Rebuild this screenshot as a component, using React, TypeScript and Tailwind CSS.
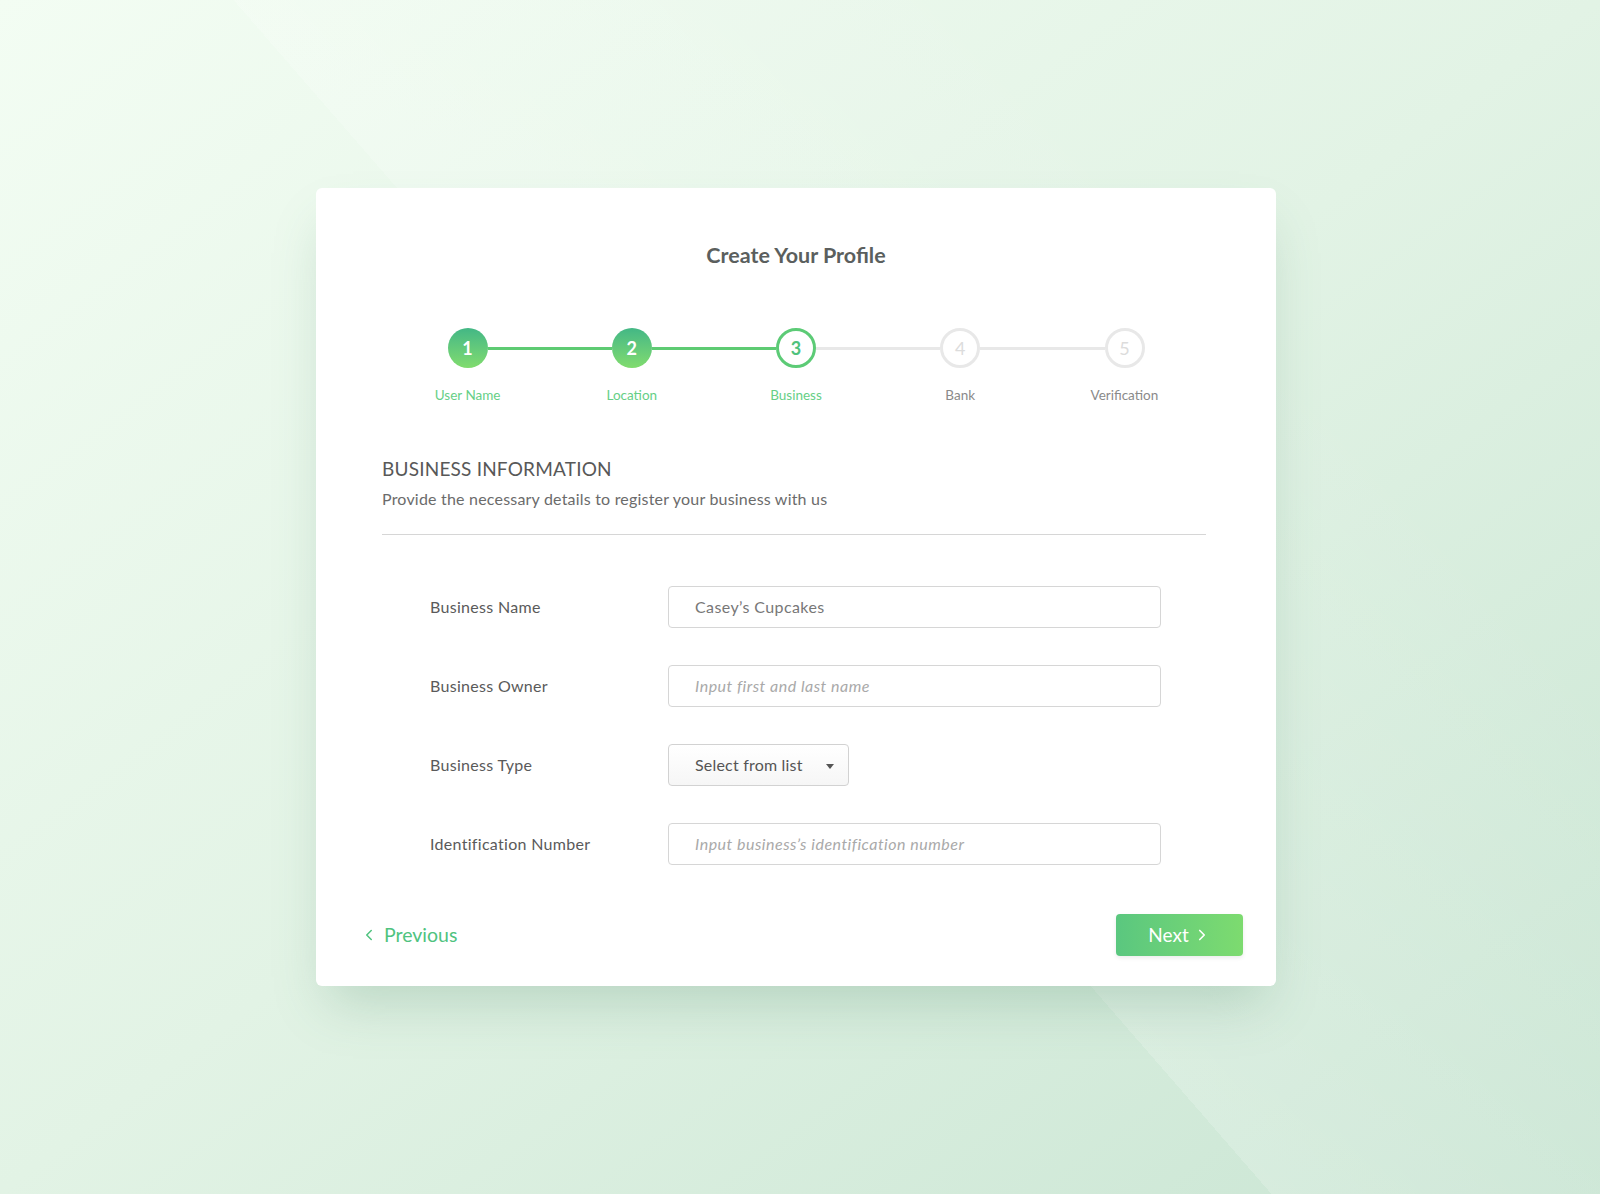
import { ChevronLeft, ChevronRight } from "lucide-react";

const steps = [
  { n: 1, label: "User Name", state: "done" },
  { n: 2, label: "Location", state: "done" },
  { n: 3, label: "Business", state: "current" },
  { n: 4, label: "Bank", state: "todo" },
  { n: 5, label: "Verification", state: "todo" },
];

function StepCircle({ n, state }: { n: number; state: string }) {
  if (state === "done") {
    return (
      <div className="w-10 h-10 rounded-full bg-gradient-to-b from-[#42b785] to-[#80dc6d] flex items-center justify-center text-white text-[18px] font-bold shrink-0">
        {n}
      </div>
    );
  }
  if (state === "current") {
    return (
      <div className="w-10 h-10 rounded-full border-[3px] border-[#5ccb76] bg-white flex items-center justify-center text-[#4fc27c] text-[18px] font-bold shrink-0">
        {n}
      </div>
    );
  }
  return (
    <div className="w-10 h-10 rounded-full border-[3px] border-[#e8e8e8] bg-white flex items-center justify-center text-[#dcdcdc] text-[18px] shrink-0">
      {n}
    </div>
  );
}

function Stepper() {
  return (
    <div className="w-[821px] mx-auto">
      <div className="flex items-center px-[62px]">
        {steps.map((s, i) => (
          <div key={s.n} className={i < steps.length - 1 ? "flex items-center flex-1" : "flex items-center"}>
            <StepCircle n={s.n} state={s.state} />
            {i < steps.length - 1 && (
              <div
                className={
                  i < 2 ? "flex-1 h-[3px] bg-[#5ecb73]" : "flex-1 h-[3px] bg-[#e8e8e8]"
                }
              />
            )}
          </div>
        ))}
      </div>
      <div className="grid grid-cols-5 mt-[19px]">
        {steps.map((s) => (
          <div
            key={s.n}
            className={
              s.state === "todo"
                ? "text-center text-[13.5px] leading-4 text-[#8a8a8a]"
                : "text-center text-[13.5px] leading-4 text-[#66cf86]"
            }
          >
            {s.label}
          </div>
        ))}
      </div>
    </div>
  );
}

function FieldRow({ label, children }: { label: string; children: React.ReactNode }) {
  return (
    <div className="flex items-center">
      <div className="w-[286px] pl-[48px] text-[16px] tracking-[0.3px] text-[#5a5a5a]">{label}</div>
      {children}
    </div>
  );
}

export default function App() {
  return (
    <div
      className="relative min-h-[1194px] w-full overflow-hidden bg-gradient-to-br from-[#f3fdf3] via-[#e2f3e5] to-[#c9e5d3]"
      style={{ fontFamily: "Lato, 'Open Sans', sans-serif" }}
    >
      {/* soft facet */}
      <div className="absolute inset-0 bg-[linear-gradient(49deg,transparent_48.2%,rgba(255,255,255,0.18)_48.2%,transparent_78%)]" />

      <div className="relative flex pl-[316px] pt-[188px]">
        <div className="w-[960px] h-[798px] bg-white rounded-[6px] shadow-[0_28px_50px_-12px_rgba(70,130,100,0.25)] flex flex-col">
          <h1 className="pt-[53px] text-center text-[21.5px] leading-7 font-bold text-[#5b5f5e]">
            Create Your Profile
          </h1>

          <div className="mt-[59px]">
            <Stepper />
          </div>

          <div className="px-[66px] mt-[54px]">
            <h2 className="text-[19px] leading-6 text-[#585858] tracking-[0.2px]">BUSINESS INFORMATION</h2>
            <p className="mt-[8px] text-[16px] leading-5 tracking-[0.2px] text-[#6b6b6b]">
              Provide the necessary details to register your business with us
            </p>
            <div className="mt-[25px] w-[824px] h-px bg-[#d6d6d6]" />

            <div className="mt-[51px] flex flex-col gap-[37px]">
              <FieldRow label="Business Name">
                <div className="w-[493px] h-[42px] rounded-[4px] border border-[#d6d6d6] flex items-center pl-[26px] text-[16px] tracking-[0.4px] text-[#777]">
                  Casey’s Cupcakes
                </div>
              </FieldRow>
              <FieldRow label="Business Owner">
                <div className="w-[493px] h-[42px] rounded-[4px] border border-[#d6d6d6] flex items-center pl-[26px] text-[16px] tracking-[0.5px] italic text-[#a9a9a9]">
                  Input first and last name
                </div>
              </FieldRow>
              <FieldRow label="Business Type">
                <div className="w-[181px] h-[42px] rounded-[4px] border border-[#d2d2d2] bg-gradient-to-b from-white to-[#f6f6f6] flex items-center pl-[26px] pr-[14px] text-[16px] tracking-[0.2px] text-[#555]">
                  <span className="flex-1">Select from list</span>
                  <svg width="8" height="5" viewBox="0 0 8 5" className="mt-[3px]">
                    <path d="M0 0h8L4 5z" fill="#555" />
                  </svg>
                </div>
              </FieldRow>
              <FieldRow label="Identification Number">
                <div className="w-[493px] h-[42px] rounded-[4px] border border-[#d6d6d6] flex items-center pl-[26px] text-[16px] tracking-[0.5px] italic text-[#a9a9a9]">
                  Input business’s identification number
                </div>
              </FieldRow>
            </div>
          </div>

          <div className="mt-auto mb-[30px] flex items-center justify-between pl-[44px] pr-[33px]">
            <button className="flex items-center gap-[6px] text-[19.5px] text-[#4fc37f]">
              <ChevronLeft className="w-[18px] h-[18px]" strokeWidth={2} />
              Previous
            </button>
            <button className="w-[127px] h-[42px] rounded-[4px] bg-gradient-to-r from-[#5ac77f] to-[#7ddb6f] text-white text-[19px] flex items-center justify-center gap-[4px] shadow-[0_2px_4px_rgba(0,0,0,0.08)]">
              Next
              <ChevronRight className="w-[18px] h-[18px]" strokeWidth={2.2} />
            </button>
          </div>
        </div>
      </div>
    </div>
  );
}
